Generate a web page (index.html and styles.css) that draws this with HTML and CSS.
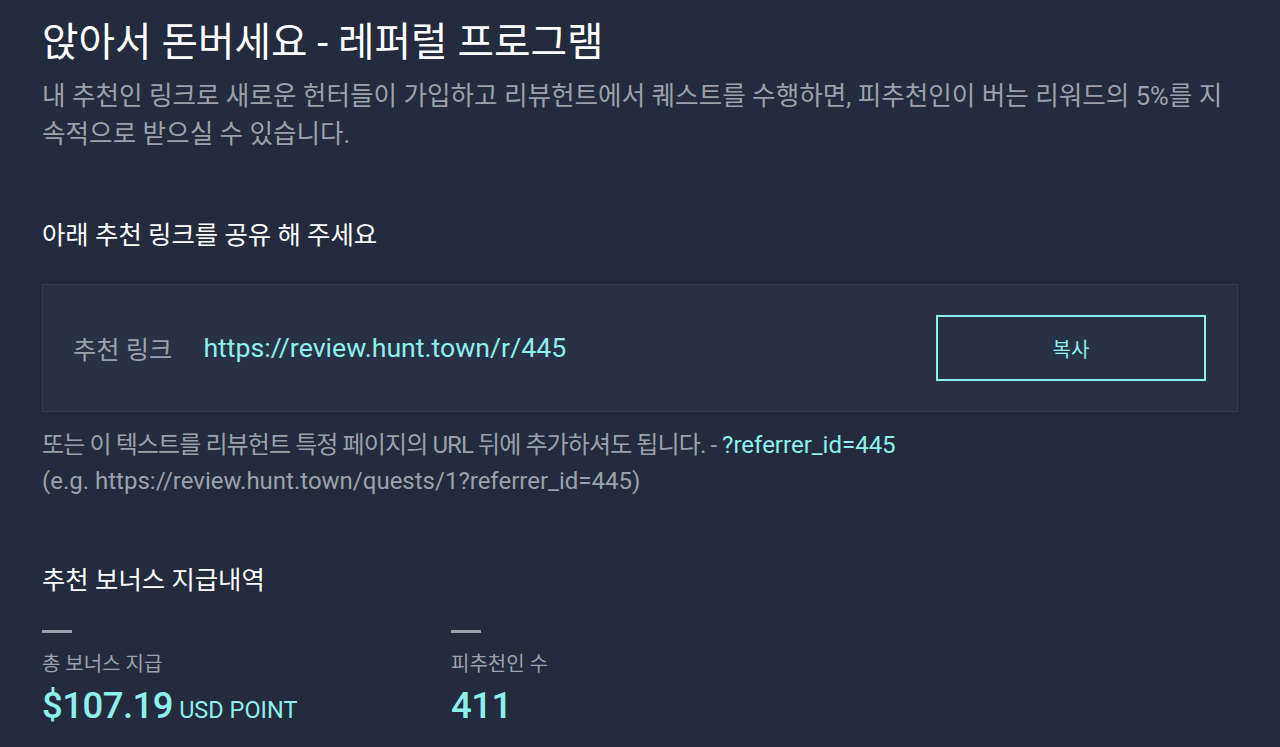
FILE: index.html
```html
<!DOCTYPE html>
<html lang="ko">
<head>
<meta charset="utf-8">
<link rel="stylesheet" href="styles.css">
</head>
<body>
<main class="page">
  <h1 class="title">앉아서 돈버세요 - 레퍼럴 프로그램</h1>
  <p class="lead">내 추천인 링크로 새로운 헌터들이 가입하고 리뷰헌트에서 퀘스트를 수행하면, 피추천인이 버는 리워드의 5%를 지속적으로 받으실 수 있습니다.</p>

  <h2 class="section-title share-title">아래 추천 링크를 공유 해 주세요</h2>
  <div class="link-box">
    <span class="link-label">추천 링크</span>
    <span class="link-url">https://review.hunt.town/r/445</span>
    <button class="copy-btn">복사</button>
  </div>
  <p class="hint"><span class="ko">또는 이 텍스트를 리뷰헌트 특정 페이지의 URL 뒤에 추가하셔도 됩니다. -</span> <span class="accent">?referrer_id=445</span><br>(e.g. https://review.hunt.town/quests/1?referrer_id=445)</p>

  <h2 class="section-title bonus-title">추천 보너스 지급내역</h2>
  <div class="stats">
    <div class="stat">
      <div class="dash"></div>
      <div class="stat-label">총 보너스 지급</div>
      <div class="stat-value">$107.19<span class="unit">USD POINT</span></div>
    </div>
    <div class="stat">
      <div class="dash"></div>
      <div class="stat-label">피추천인 수</div>
      <div class="stat-value">411</div>
    </div>
  </div>
</main>
</body>
</html>
```
FILE: styles.css
```css
* { box-sizing: border-box; }
html, body {
  margin: 0;
  padding: 0;
  background: #232b3d;
  height: 100%;
  overflow: hidden;
}
body {
  font-family: Roboto, "Noto Sans CJK KR", sans-serif;
  color: #ffffff;
}
.page {
  padding: 15px 42px 0 42px;
}
.title {
  margin: 0;
  font-size: 39.7px;
  font-weight: 400;
  line-height: 56px;
  color: #ffffff;
}
.lead {
  margin: 6px 0 0 0;
  font-size: 25.6px;
  line-height: 38px;
  color: #9ca1a9;
  max-width: 1188px;
  word-break: break-all;
}
.section-title {
  margin: 0;
  font-size: 25.4px;
  font-weight: 400;
  line-height: 34px;
  color: #ffffff;
}
.share-title {
  margin-top: 65px;
}
.link-box {
  margin-top: 32px;
  display: flex;
  align-items: center;
  height: 128px;
  padding: 0 31px 0 30px;
  background: #293244;
  border: 1px solid #343e51;
}
.link-label {
  font-size: 25.3px;
  color: #9ca1a9;
}
.link-url {
  margin-left: 31px;
  font-size: 26.7px;
  color: #8ef0ec;
}
.copy-btn {
  margin-left: auto;
  width: 270px;
  height: 66px;
  background: transparent;
  border: 2px solid #8ef0ec;
  color: #8ef0ec;
  font-family: Roboto, "Noto Sans CJK KR", sans-serif;
  font-size: 20px;
  padding: 0;
}
.hint {
  margin: 15px 0 0 0;
  font-size: 24px;
  line-height: 36px;
  color: #9ca1a9;
}
.hint .ko { letter-spacing: -0.9px; }
.accent { color: #8ef0ec; }
.bonus-title {
  margin-top: 64px;
}
.stats {
  margin-top: 33px;
  display: flex;
}
.stat {
  width: 409px;
}
.dash {
  width: 30px;
  height: 3px;
  background: #9ca1a9;
}
.stat-label {
  margin-top: 18px;
  font-size: 20px;
  line-height: 26px;
  color: #9ca1a9;
}
.stat-value {
  margin-top: 8px;
  font-size: 36.5px;
  font-weight: 500;
  line-height: 42px;
  color: #8ef0ec;
  letter-spacing: -0.5px;
}
.unit {
  margin-left: 6px;
  font-size: 23.5px;
  font-weight: 400;
  letter-spacing: 0;
}
```
